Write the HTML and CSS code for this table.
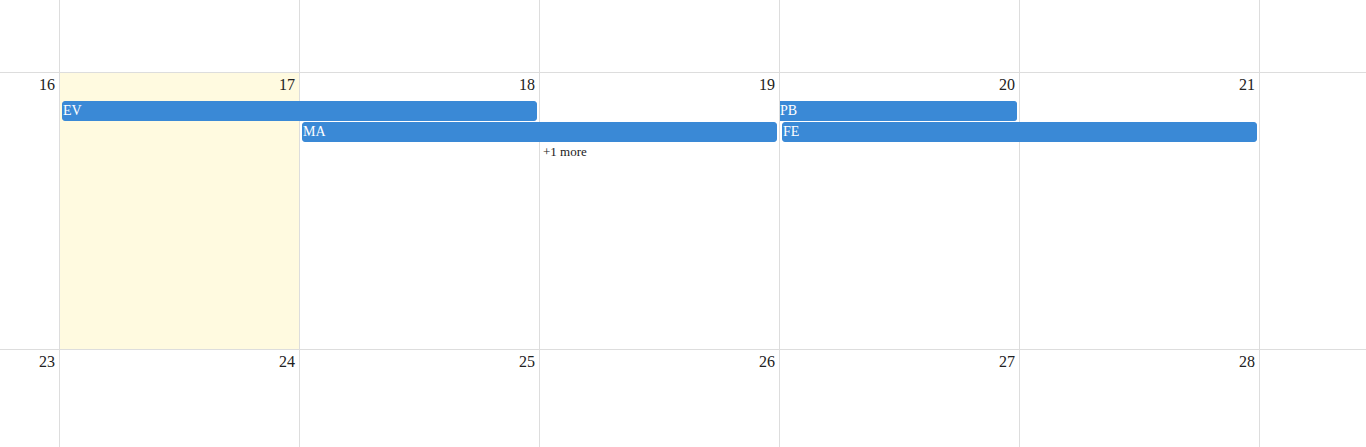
FILE: index.html
```html
<!DOCTYPE html>
<html>
<head>
<meta charset="utf-8">
<link rel="stylesheet" href="styles.css">
</head>
<body>
<div class="cal">
  <div class="week week-top">
    <div class="day"></div>
    <div class="day"></div>
    <div class="day"></div>
    <div class="day"></div>
    <div class="day"></div>
    <div class="day"></div>
    <div class="day last"></div>
  </div>

  <div class="week week-mid">
    <div class="day c1"></div>
    <div class="day c2 today"></div>
    <div class="day c3"></div>
    <div class="day c4"></div>
    <div class="day c5"></div>
    <div class="day c6"></div>
    <div class="day c7 last"></div>

    <div class="num c1">16</div>
    <div class="num c2">17</div>
    <div class="num c3">18</div>
    <div class="num c4">19</div>
    <div class="num c5">20</div>
    <div class="num c6">21</div>

    <div class="event ev-a">EV</div>
    <div class="event ev-b">MA</div>
    <div class="event ev-c cont">PB</div>
    <div class="event ev-d">FE</div>
    <a class="more">+1 more</a>
  </div>

  <div class="week week-bot">
    <div class="day c1"></div>
    <div class="day c2"></div>
    <div class="day c3"></div>
    <div class="day c4"></div>
    <div class="day c5"></div>
    <div class="day c6"></div>
    <div class="day c7 last"></div>

    <div class="num c1">23</div>
    <div class="num c2">24</div>
    <div class="num c3">25</div>
    <div class="num c4">26</div>
    <div class="num c5">27</div>
    <div class="num c6">28</div>
  </div>
</div>
</body>
</html>
```

FILE: styles.css
```css
html, body {
  margin: 0;
  padding: 0;
  background: #fff;
  overflow: hidden;
}

body {
  font-family: "Liberation Serif", "Times New Roman", serif;
  font-size: 16px;
  color: #212121;
}

.cal {
  width: 1366px;
  height: 447px;
  overflow: hidden;
}

.week {
  display: grid;
  grid-template-columns: 60px repeat(5, 240px) 1fr;
  border-bottom: 1px solid #ddd;
  box-sizing: border-box;
}

.week-top {
  height: 73px;
}

.week-mid {
  height: 277px;
  grid-template-rows: 28px 21px 21px auto 1fr;
}

.week-bot {
  height: 97px;
  border-bottom: none;
  grid-template-rows: 28px 1fr;
}

.day {
  border-right: 1px solid #ddd;
  grid-row: 1 / -1;
}

.day.last {
  border-right: none;
}

.today {
  background: #fffae0;
}

.c1 { grid-column: 1; }
.c2 { grid-column: 2; }
.c3 { grid-column: 3; }
.c4 { grid-column: 4; }
.c5 { grid-column: 5; }
.c6 { grid-column: 6; }
.c7 { grid-column: 7; }

.num {
  grid-row: 1;
  text-align: right;
  padding: 3px 5px 0 0;
  line-height: 18px;
  font-size: 16px;
  color: #212121;
}

.event {
  background: #3a89d6;
  border: 1px solid #3a89d6;
  color: #fff;
  font-size: 14px;
  line-height: 18px;
  height: 20px;
  box-sizing: border-box;
  border-radius: 3px;
  padding-left: 0;
  margin: 0 3px 1px 2px;
  white-space: nowrap;
  overflow: hidden;
}

.event.cont {
  margin-left: 0;
  border-top-left-radius: 0;
  border-bottom-left-radius: 0;
  border-left-width: 0;
}

.ev-a { grid-row: 2; grid-column: 2 / 4; }
.ev-b { grid-row: 3; grid-column: 3 / 5; }
.ev-c { grid-row: 2; grid-column: 5 / 6; }
.ev-d { grid-row: 3; grid-column: 5 / 7; }

.more {
  grid-row: 4;
  grid-column: 4;
  font-size: 13px;
  line-height: 15px;
  margin: 1px 0 0 3px;
  color: #212121;
}
```
